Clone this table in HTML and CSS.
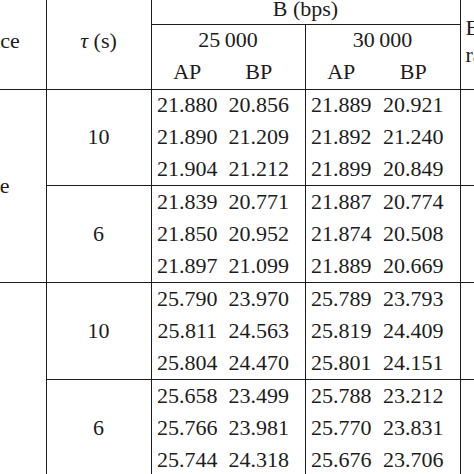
FILE: index.html
```html
<!DOCTYPE html>
<html>
<head>
<meta charset="utf-8">
<link rel="stylesheet" href="styles.css">
</head>
<body>
<div class="frame">
<table class="results">
<colgroup>
<col class="c-seq"><col class="c-tau"><col class="c-a"><col class="c-b"><col class="c-a"><col class="c-b2"><col class="c-err">
</colgroup>
<thead>
<tr class="h1">
<th rowspan="3" class="vl">Sequence</th>
<th rowspan="3" class="vl"><i>τ</i> (s)</th>
<th colspan="4" class="vl hb">B (bps)</th>
<th rowspan="3" class="err">Error<br>rate (%)</th>
</tr>
<tr class="h2">
<th colspan="2" class="vl">25&#8201;000</th>
<th colspan="2" class="vl">30&#8201;000</th>
</tr>
<tr class="h3">
<th>AP</th><th class="vl b">BP</th><th>AP</th><th class="vl b">BP</th>
</tr>
</thead>
<tbody>
<tr><td rowspan="6" class="vl">Mobile</td><td rowspan="3" class="vl bb">10</td><td>21.880</td><td class="vl b">20.856</td><td>21.889</td><td class="vl b">20.921</td><td rowspan="3" class="bb"></td></tr>
<tr><td>21.890</td><td class="vl b">21.209</td><td>21.892</td><td class="vl b">21.240</td></tr>
<tr class="end"><td>21.904</td><td class="vl b">21.212</td><td>21.899</td><td class="vl b">20.849</td></tr>
<tr><td rowspan="3" class="vl">6</td><td>21.839</td><td class="vl b">20.771</td><td>21.887</td><td class="vl b">20.774</td><td rowspan="3"></td></tr>
<tr><td>21.850</td><td class="vl b">20.952</td><td>21.874</td><td class="vl b">20.508</td></tr>
<tr><td>21.897</td><td class="vl b">21.099</td><td>21.889</td><td class="vl b">20.669</td></tr>
</tbody>
<tbody>
<tr><td rowspan="6" class="vl">Bus</td><td rowspan="3" class="vl bb">10</td><td>25.790</td><td class="vl b">23.970</td><td>25.789</td><td class="vl b">23.793</td><td rowspan="3" class="bb"></td></tr>
<tr><td>25.811</td><td class="vl b">24.563</td><td>25.819</td><td class="vl b">24.409</td></tr>
<tr class="end"><td>25.804</td><td class="vl b">24.470</td><td>25.801</td><td class="vl b">24.151</td></tr>
<tr><td rowspan="3" class="vl">6</td><td>25.658</td><td class="vl b">23.499</td><td>25.788</td><td class="vl b">23.212</td><td rowspan="3"></td></tr>
<tr><td>25.766</td><td class="vl b">23.981</td><td>25.770</td><td class="vl b">23.831</td></tr>
<tr><td>25.744</td><td class="vl b">24.318</td><td>25.676</td><td class="vl b">23.706</td></tr>
</tbody>
</table>
</div>
</body>
</html>
```
FILE: styles.css
```css
html, body {
  margin: 0;
  padding: 0;
  background: #ffffff;
}
.frame {
  width: 474px;
  height: 474px;
  overflow: hidden;
}
.results {
  border-collapse: collapse;
  table-layout: fixed;
  width: 670px;
  margin-left: -90px;
  margin-top: -6px;
  font-family: "Liberation Serif", "Times New Roman", serif;
  font-size: 22px;
  color: #1c1c1c;
}
.c-seq { width: 136px; }
.c-tau { width: 105px; }
.c-a { width: 72px; }
.c-b { width: 82px; }
.c-b2 { width: 83px; }
.c-err { width: 120px; }
.results th, .results td {
  padding: 0;
  text-align: center;
  vertical-align: middle;
  font-weight: normal;
  white-space: nowrap;
  line-height: 1;
}
.results .b { padding-right: 10px; }
.results .vl { border-right: 1.5px solid #1c1c1c; }
.results .hb { border-bottom: 1.5px solid #1c1c1c; }
.results .bb { border-bottom: 1.5px solid #1c1c1c; }
.results .end td { border-bottom: 1.5px solid #1c1c1c; }
.results thead { border-bottom: 1.5px solid #1c1c1c; }
.results tbody { border-bottom: 1.5px solid #1c1c1c; }
.h1 { height: 30px; }
.h2 { height: 32px; }
.h3 { height: 33px; }
.results tbody tr { height: 32.3px; }
.results .err {
  text-align: left;
  padding-left: 5px;
  line-height: 1.25;
  white-space: normal;
}
```
